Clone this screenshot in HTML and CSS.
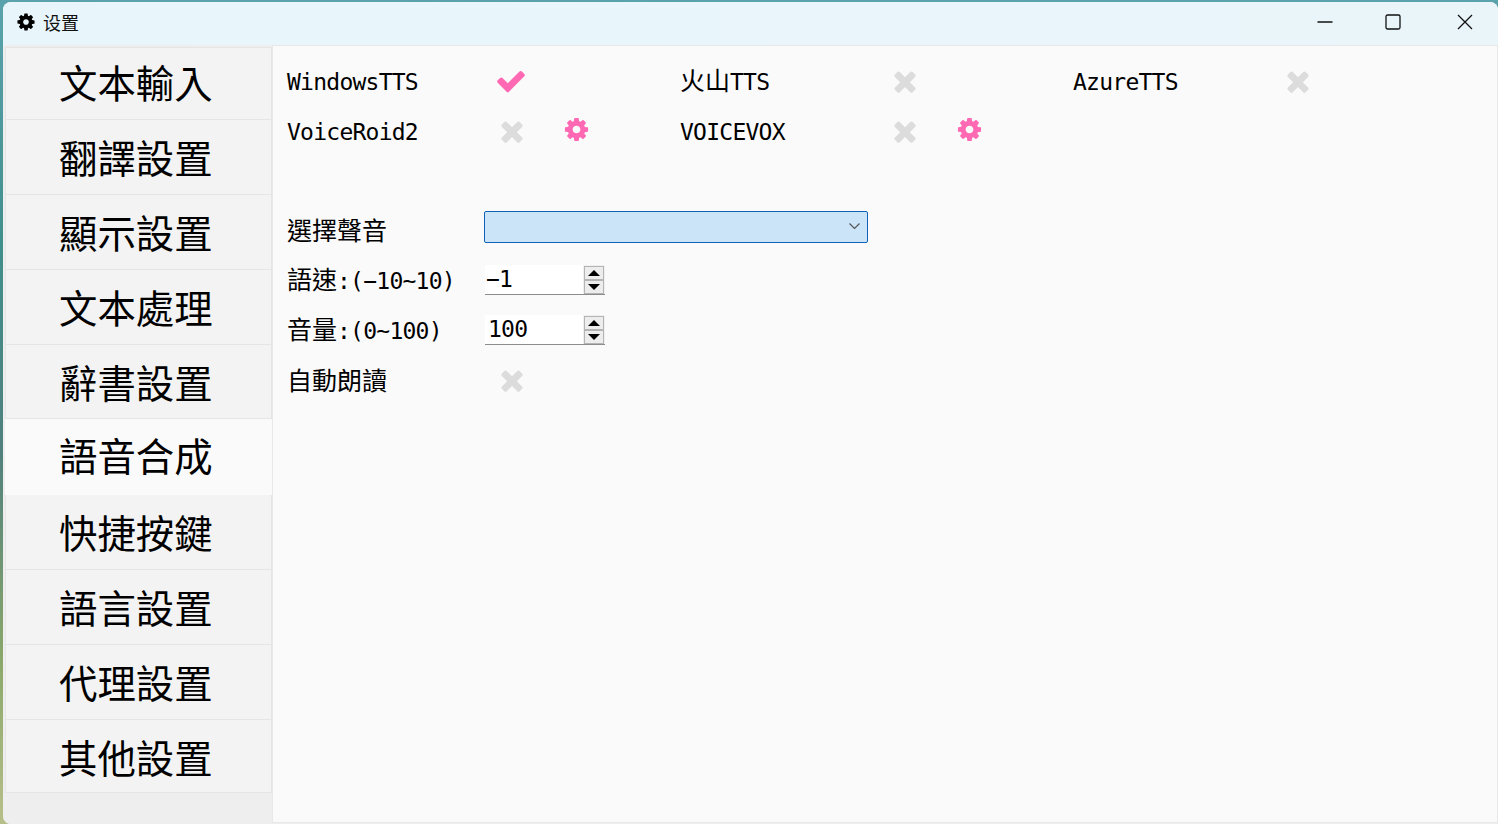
FILE: index.html
```html
<!DOCTYPE html>
<html lang="zh-Hant">
<head>
<meta charset="utf-8">
<title>设置</title>
<link rel="stylesheet" href="styles.css">
</head>
<body>
<svg class="defs" width="0" height="0" aria-hidden="true">
  <symbol id="i-check" viewBox="0 0 1792 1792"><path d="M1671 566q0 40-28 68l-724 724-136 136q-28 28-68 28t-68-28l-136-136-362-362q-28-28-28-68t28-68l136-136q28-28 68-28t68 28l294 295 656-657q28-28 68-28t68 28l136 136q28 28 28 68z"/></symbol>
  <symbol id="i-times" viewBox="0 0 1792 1792"><path d="M1490 1322q0 40-28 68l-136 136q-28 28-68 28t-68-28l-294-294-294 294q-28 28-68 28t-68-28l-136-136q-28-28-28-68t28-68l294-294-294-294q-28-28-28-68t28-68l136-136q28-28 68-28t68 28l294 294 294-294q28-28 68-28t68 28l136 136q28 28 28 68t-28 68l-294 294 294 294q28 28 28 68z"/></symbol>
  <symbol id="i-cog" viewBox="0 0 1792 1792"><path d="M1152 896q0-106-75-181t-181-75-181 75-75 181 75 181 181 75 181-75 75-181zm512-109v222q0 12-8 23t-20 13l-185 28q-19 54-39 91 35 50 107 138 10 12 10 25t-9 23q-27 37-99 108t-94 71q-12 0-26-9l-138-108q-44 23-91 38-16 136-29 186-7 28-36 28h-222q-14 0-24.500-8.500t-11.500-21.500l-28-184q-49-16-90-37l-141 107q-10 9-25 9-14 0-25-11-126-114-165-168-7-10-7-23 0-12 8-23 15-21 51-66.500t54-70.500q-27-50-41-99l-183-27q-13-2-21-12.500t-8-23.500v-222q0-12 8-23t19-13l186-28q14-46 39-92-40-57-107-138-10-12-10-24 0-10 9-23 26-36 98.500-107.500t94.500-71.500q13 0 26 10l138 107q44-23 91-38 16-136 29-186 7-28 36-28h222q14 0 24.500 8.500t11.500 21.500l28 184q49 16 90 37l142-107q9-9 24-9 13 0 25 10 129 119 165 170 7 8 7 22 0 12-8 23-15 21-51 66.500t-54 70.500q26 50 41 98l183 28q13 2 21 12.500t8 23.500z"/></symbol>
</svg>
<div class="window">
  <header class="titlebar">
    <svg class="title-icon"><use href="#i-cog"/></svg>
    <span class="title-text">设置</span>
    <div class="controls">
      <button class="ctl" aria-label="minimize"><svg width="16" height="16" viewBox="0 0 16 16"><path d="M0.500 8h15" class="ctl-line"/></svg></button>
      <button class="ctl ctl-max" aria-label="maximize"><svg width="16" height="16" viewBox="0 0 16 16"><rect x="1" y="1" width="14" height="14" rx="1.500" class="ctl-line"/></svg></button>
      <button class="ctl" aria-label="close"><svg width="16" height="16" viewBox="0 0 16 16"><path d="M1 1l14 14M15 1L1 15" class="ctl-line"/></svg></button>
    </div>
  </header>
  <div class="main">
    <nav class="sidebar">
      <a class="tab t1">文本輸入</a>
      <a class="tab">翻譯設置</a>
      <a class="tab">顯示設置</a>
      <a class="tab">文本處理</a>
      <a class="tab short">辭書設置</a>
      <a class="tab active">語音合成</a>
      <a class="tab">快捷按鍵</a>
      <a class="tab">語言設置</a>
      <a class="tab">代理設置</a>
      <a class="tab last">其他設置</a>
    </nav>
    <section class="content">
      <div class="engines">
        <span class="label"><span class="lat">WindowsTTS</span></span>
        <svg class="ico check"><use href="#i-check"/></svg>
        <span></span>
        <span class="label"><span>火山</span><span class="lat">TTS</span></span>
        <svg class="ico off"><use href="#i-times"/></svg>
        <span></span>
        <span class="label"><span class="lat">AzureTTS</span></span>
        <svg class="ico off"><use href="#i-times"/></svg>
        <span></span>
        <span class="label"><span class="lat">VoiceRoid2</span></span>
        <svg class="ico off"><use href="#i-times"/></svg>
        <svg class="ico cog"><use href="#i-cog"/></svg>
        <span class="label"><span class="lat">VOICEVOX</span></span>
        <svg class="ico off"><use href="#i-times"/></svg>
        <svg class="ico cog"><use href="#i-cog"/></svg>
      </div>
      <div class="form">
        <div class="row">
          <span class="label">選擇聲音</span>
          <div class="select"><svg width="11" height="7" viewBox="0 0 11 7"><path d="M0.500 0.500l5 5 5-5" class="chev"/></svg></div>
        </div>
        <div class="row">
          <span class="label">語速<span class="lat">:(−10~10)</span></span>
          <div class="spin">
            <span class="val neg"><span class="lat">−1</span></span>
            <div class="arrows"><span class="arr"><i class="up"></i></span><span class="arr"><i class="down"></i></span></div>
          </div>
        </div>
        <div class="row">
          <span class="label">音量<span class="lat">:(0~100)</span></span>
          <div class="spin">
            <span class="val"><span class="lat">100</span></span>
            <div class="arrows"><span class="arr"><i class="up"></i></span><span class="arr"><i class="down"></i></span></div>
          </div>
        </div>
        <div class="row">
          <span class="label">自動朗讀</span>
          <svg class="ico off auto"><use href="#i-times"/></svg>
        </div>
      </div>
    </section>
  </div>
</div>
</body>
</html>
```
FILE: styles.css
```css
html, body { margin: 0; height: 100%; }
body {
  width: 1498px;
  height: 824px;
  overflow: hidden;
  box-sizing: border-box;
  padding: 2px 0 0 3px;
  background: linear-gradient(180deg, #5aa3ad 0%, #3f8f8c 30%, #51807d 55%, #8aa86a 80%, #b7bf8a 100%);
  font-family: "Noto Sans CJK TC", "Noto Sans CJK SC", sans-serif;
  color: #000;
}
.defs { position: absolute; }
.window {
  width: 1495px;
  height: 822px;
  border-radius: 8px 8px 0 8px;
  overflow: hidden;
  background: #eeeeee;
  display: flex;
  flex-direction: column;
}
.titlebar {
  height: 39px;
  padding-bottom: 4px;
  flex: none;
  display: flex;
  align-items: center;
  background: linear-gradient(90deg, #e8f6fc 0%, #eaf5fa 100%);
}
.title-icon { width: 20px; height: 20px; margin-left: 13px; fill: #000; }
.title-text { font-size: 18px; margin-left: 7px; line-height: 20px; color: #111; }
.controls { margin-left: auto; display: flex; margin-right: -2px; }
.ctl {
  width: 70px;
  height: 39px;
  border: 0;
  padding: 0;
  background: none;
  display: flex;
  align-items: center;
  justify-content: center;
}
.ctl-max { margin-left: -2px; margin-right: 2px; }
.ctl-line { fill: none; stroke: #111; stroke-width: 1.3; }
.main { flex: 1; display: flex; min-height: 0; }
.sidebar {
  width: 269px;
  flex: none;
  padding: 2px 0 0 2px;
  box-sizing: border-box;
  display: flex;
  flex-direction: column;
  background: #eeeeee;
}
.tab {
  height: 74px;
  flex: none;
  background: #f3f3f3;
  border: solid #e5e5e5;
  border-width: 0 1px 1px 1px;
  font-size: 38.4px;
  line-height: 72px;
  padding-left: 53px;
  white-space: nowrap;
}
.t1 { height: 71px; line-height: 66px; border-top-width: 1px; }
.short { height: 73px; }
.last { height: 72px; }
.active {
  height: 76px;
  background: #fafafa;
  border-color: #fafafa;
  border-bottom-width: 0;
  line-height: 71px;
}
.content {
  flex: 1;
  background: #fafafa;
  border: 1px solid #e8e8e8;
  margin: 0 0 1px;
  padding-left: 14px;
  min-width: 0;
}
.label {
  font-size: 25px;
  line-height: 32px;
  white-space: nowrap;
}
.lat {
  font-family: "DejaVu Sans Mono", monospace;
  font-size: 23px;
  letter-spacing: -0.75px;
}
.engines {
  display: grid;
  grid-template-columns: repeat(3, 210px 32px 151px);
  grid-auto-rows: 50px;
  align-items: center;
  padding-top: 10px;
}
.engines .label { margin-top: -2px; }
.ico { width: 32px; height: 32px; display: block; }
.check { fill: #ff69b4; margin-left: -2px; }
.off { fill: #dcdcdc; margin-left: -1px; }
.cog { width: 27px; height: 27px; fill: #ff69b4; margin-left: 34px; margin-top: -3px; }
.form {
  display: flex;
  flex-direction: column;
  margin-top: 49px;
}
.row {
  display: flex;
  align-items: center;
  height: 50px;
}
.row .label { width: 197px; flex: none; margin-top: -2px; }
.auto { margin-left: 12px; }
.select {
  width: 384px;
  height: 32px;
  margin-top: -7px;
  box-sizing: border-box;
  background: #cce4f7;
  border: 1px solid #0f62b5;
  border-radius: 2px;
  display: flex;
  align-items: center;
  justify-content: flex-end;
  padding-right: 7px;
}
.chev { fill: none; stroke: #555; stroke-width: 1.2; }
.spin {
  width: 120px;
  height: 30px;
  margin: -1px 0 0 1px;
  box-sizing: border-box;
  background: #fff;
  border-bottom: 1px solid #8c8c8c;
  display: flex;
  align-items: stretch;
  justify-content: space-between;
}
.val { line-height: 29px; padding-left: 3px; }
.neg { padding-left: 1px; }
.arrows {
  width: 22px;
  padding: 1px 1px 0;
  background: #f0f0f0;
  display: flex;
  flex-direction: column;
  box-sizing: border-box;
}
.arr {
  flex: 1;
  background: #ededed;
  border: 1px solid #b4b4b4;
  display: flex;
  align-items: center;
  justify-content: center;
}
.arr i { width: 0; height: 0; border-left: 6px solid transparent; border-right: 6px solid transparent; }
.up { border-bottom: 6px solid #000; }
.down { border-top: 6px solid #000; }
```
